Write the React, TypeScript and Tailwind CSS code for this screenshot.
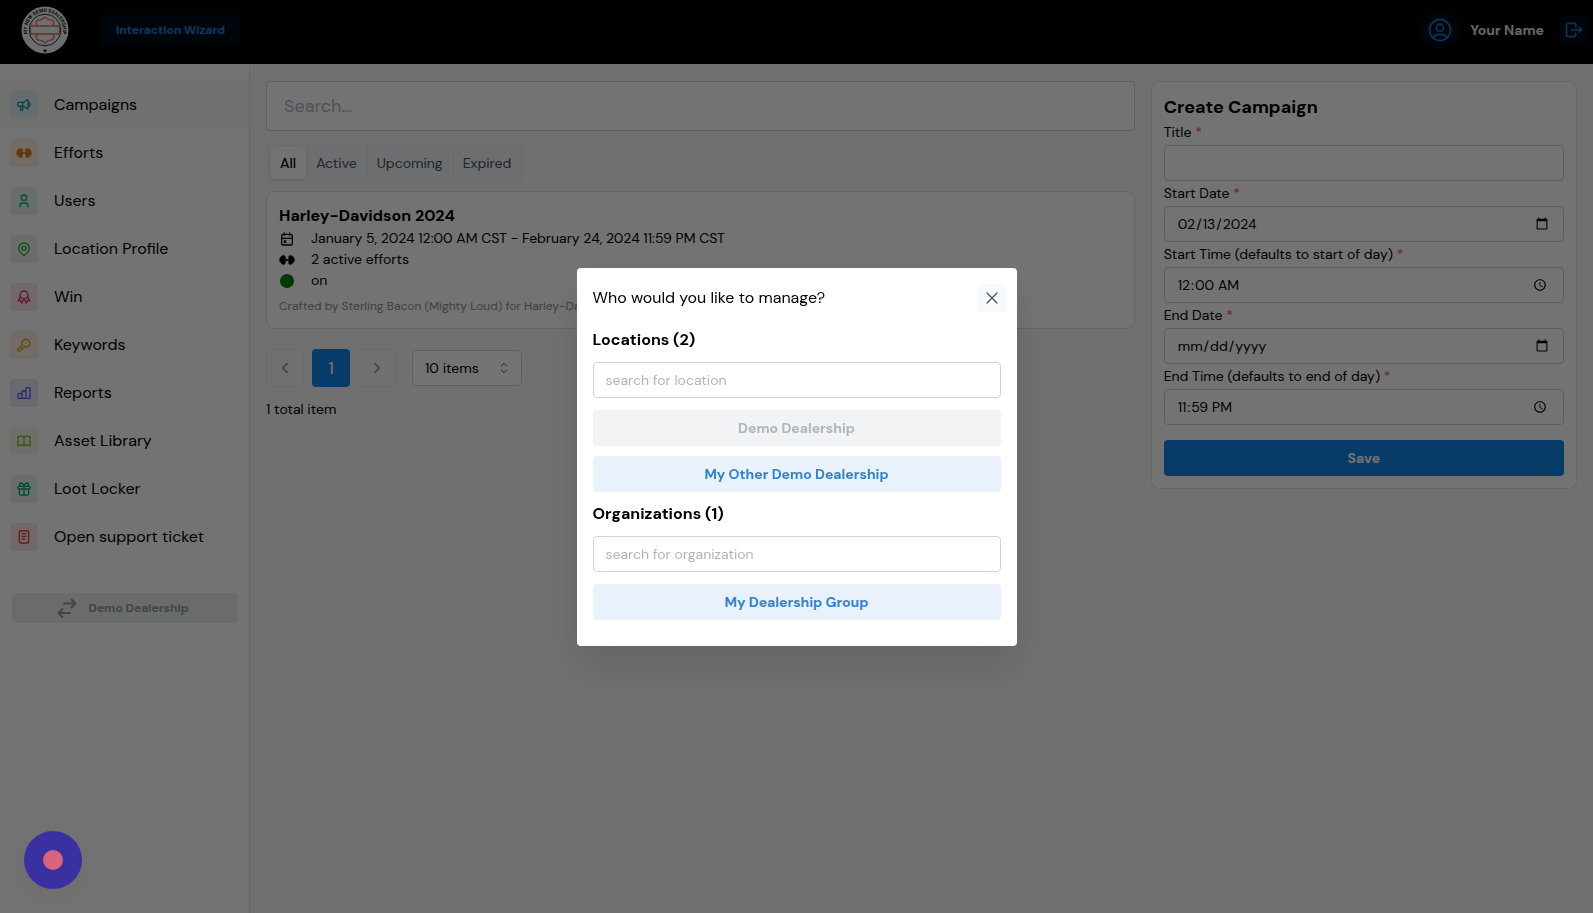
import type { ReactNode } from "react";
import {
  TbAward,
  TbBook,
  TbCalendarEvent,
  TbChevronLeft,
  TbChevronRight,
  TbGift,
  TbKey,
  TbLogout,
  TbMapPin,
  TbNotes,
  TbSelector,
  TbSpeakerphone,
  TbUser,
  TbUserCircle,
  TbX,
} from "react-icons/tb";

// Two fists meeting, used for efforts
function EffortsIcon({ size = 16 }: { size?: number }) {
  return (
    <svg width={size} height={size} viewBox="0 0 16 16" fill="currentColor" stroke="currentColor" strokeWidth="0.800" strokeLinejoin="round">
      <path d="M.8 7 2 4.700 3.800 3.700 5.500 3.700 6.200 5v2.400h3.600V5l.7-1.300 1.700 0 1.800 1L15.200 7v2.300l-1.500 1.500-1 1.300-2.200.2L9.800 11V8.600H6.200V11l-.7 1.300-2.200-.2-1-1.300L.8 9.300Z" />
    </svg>
  );
}

function BarsIcon() {
  return (
    <svg width="16" height="16" viewBox="0 0 24 24" fill="none" stroke="currentColor" strokeWidth="2" strokeLinejoin="round" strokeLinecap="round">
      <path d="M9 20V10a1 1 0 0 1 1-1h5v11M4 20h16a1 1 0 0 0 1-1V5a1 1 0 0 0-1-1h-4a1 1 0 0 0-1 1v4M9 13H4a1 1 0 0 0-1 1v5a1 1 0 0 0 1 1" />
    </svg>
  );
}

function SwapIcon() {
  return (
    <svg width="22" height="22" viewBox="0 0 22 22" fill="none" stroke="currentColor" strokeWidth="2" strokeLinecap="round" strokeLinejoin="round">
      <path d="M8 6.500h11.500M15.500 2.500l4 4-4 4M14 16H2.500M6.500 12l-4 4 4 4" />
    </svg>
  );
}

function Logo() {
  return (
    <svg width="48" height="48" viewBox="0 0 48 48" role="img" aria-label="My New Demo Dealership">
      <circle cx="24" cy="24" r="23.500" fill="#f1f3f5" />
      <circle cx="24" cy="24" r="15.800" fill="none" stroke="#1c3248" strokeWidth="1" />
      <path id="logo-arc" d="M6.600 28.700A18 18 0 1 1 41.400 28.700" fill="none" />
      <text className="font-['Roboto'] font-bold" fontSize="4.900" fill="#111">
        <textPath href="#logo-arc" startOffset="50%" textAnchor="middle">
          MY NEW DEMO DEALERSHIP
        </textPath>
      </text>
      <g fill="none" stroke="#e8703a" strokeWidth="1.300" strokeLinejoin="round">
        <path d="M15.500 20c.5-1.200.3-2.200-.5-3.200l1.500-2.800c2.500.5 5-.5 7.500-3 2.500 2.500 5 3.500 7.500 3l1.500 2.800c-.8 1-1 2-.5 3.200" />
        <path d="M15.500 28c.5 1.200.3 2.200-.5 3.200l1.500 2.800c2.500-.5 5 .5 7.500 3 2.500-2.500 5-3.500 7.500-3l1.500-2.800c-.8-1-1-2-.5-3.200" />
        <path d="M9.500 20h29v8h-29z" />
      </g>
      <path d="m24 42.500.6 1.500 1.600.1-1.200 1 .4 1.500-1.400-.8-1.400.8.4-1.500-1.200-1 1.600-.1z" fill="#111" />
    </svg>
  );
}

interface NavItem {
  label: string;
  icon: ReactNode;
  tint: string;
}

const NAV_ITEMS: NavItem[] = [
  { label: "Campaigns", icon: <TbSpeakerphone size={16} />, tint: "bg-[#e3f1f3] text-[#1098ad]" },
  { label: "Efforts", icon: <EffortsIcon />, tint: "bg-[#fdeee2] text-[#e07818]" },
  { label: "Users", icon: <TbUser size={16} />, tint: "bg-[#e6f3ef] text-[#12a67c]" },
  { label: "Location Profile", icon: <TbMapPin size={16} />, tint: "bg-[#e8f4ea] text-[#37a84c]" },
  { label: "Win", icon: <TbAward size={16} />, tint: "bg-[#f8e6ee] text-[#d6336c]" },
  { label: "Keywords", icon: <TbKey size={16} />, tint: "bg-[#faf2e2] text-[#eaa030]" },
  { label: "Reports", icon: <BarsIcon />, tint: "bg-[#e8ebf8] text-[#5064d8]" },
  { label: "Asset Library", icon: <TbBook size={16} />, tint: "bg-[#f1f6e6] text-[#82b82e]" },
  { label: "Loot Locker", icon: <TbGift size={16} />, tint: "bg-[#e6f3ef] text-[#12a67c]" },
  { label: "Open support ticket", icon: <TbNotes size={16} />, tint: "bg-[#fae8e8] text-[#e03e3e]" },
];

const TABS = ["All", "Active", "Upcoming", "Expired"];

const FIELDS = [
  { id: "title", label: "Title", type: "text", value: "" },
  { id: "start-date", label: "Start Date", type: "date", value: "2024-02-13" },
  { id: "start-time", label: "Start Time (defaults to start of day)", type: "time", value: "00:00" },
  { id: "end-date", label: "End Date", type: "date", value: "" },
  { id: "end-time", label: "End Time (defaults to end of day)", type: "time", value: "23:59" },
];

function Header() {
  return (
    <header className="flex h-16 items-center bg-[#040404] pr-[5px] pb-1 pl-[21px]">
      <Logo />
      <button className="ml-8 h-[30px] rounded bg-[#020c1a] px-[15px] text-xs font-bold text-[#1c7ed6]">
        Interaction Wizard
      </button>
      <div className="ml-auto flex items-center">
        <button aria-label="Profile" className="flex size-[38px] items-center justify-center rounded-full bg-[#020c1a] text-[#1971c2]">
          <TbUserCircle size={28} strokeWidth={1.500} />
        </button>
        <span className="ml-[11px] text-sm font-bold text-[#e0e2e5]">Your Name</span>
        <button aria-label="Log out" className="ml-4 flex size-7 items-center justify-center rounded bg-[#020c1a] text-[#1971c2]">
          <TbLogout size={20} />
        </button>
      </div>
    </header>
  );
}

function Sidebar() {
  return (
    <aside className="w-[250px] shrink-0 border-r border-[#dee2e6] bg-white pt-4">
      <nav>
        {NAV_ITEMS.map((item, i) => (
          <a
            key={item.label}
            href="#"
            className={`flex h-12 items-center gap-4 px-2.5 text-base ${i === 0 ? "bg-[#f8f9f4]" : ""}`}
          >
            <span className={`flex size-7 items-center justify-center rounded ${item.tint}`}>{item.icon}</span>
            {item.label}
          </a>
        ))}
      </nav>
      <div className="px-3 pt-8">
        <button className="flex h-[30px] w-full items-center justify-center gap-2.5 rounded bg-[#ebf0f0] pr-1 text-xs font-bold text-[#9097a3]">
          <SwapIcon />
          Demo Dealership
        </button>
      </div>
    </aside>
  );
}

function CampaignCard() {
  return (
    <article className="mt-2 rounded-lg border border-[#dee2e6] bg-white p-3">
      <h2 className="text-base leading-6 font-bold">Harley-Davidson 2024</h2>
      <ul className="text-sm leading-[21px]">
        <li className="flex items-center gap-4">
          <TbCalendarEvent size={16} />
          January 5, 2024 12:00 AM CST - February 24, 2024 11:59 PM CST
        </li>
        <li className="flex items-center gap-4">
          <EffortsIcon />
          2 active efforts
        </li>
        <li className="flex items-center gap-4">
          <span className="mx-px size-3.5 rounded-full bg-[#008000]" />
          on
        </li>
      </ul>
      <p className="mt-1.5 text-xs leading-[19px] text-[#868e96]">
        Crafted by Sterling Bacon (Mighty Loud) for Harley-Davidson
      </p>
    </article>
  );
}

function Pager() {
  const arrow =
    "flex size-[38px] items-center justify-center rounded border border-[#e9ecef] text-[#868e96]";
  return (
    <div className="mt-5 flex items-center gap-2">
      <button aria-label="Previous page" className={arrow}>
        <TbChevronLeft size={18} />
      </button>
      <button className="size-[38px] rounded bg-[#1186e8] text-lg text-white">1</button>
      <button aria-label="Next page" className={arrow}>
        <TbChevronRight size={18} />
      </button>
      <div className="relative ml-2">
        <select
          aria-label="Items per page"
          className="h-9 w-[110px] appearance-none rounded border border-[#ced4da] bg-white px-3 text-sm"
        >
          <option>10 items</option>
        </select>
        <TbSelector size={16} strokeWidth={1.500} className="pointer-events-none absolute top-2.5 right-2.5 text-[#495057]" />
      </div>
    </div>
  );
}

function CampaignForm() {
  return (
    <form className="rounded-lg border border-[#dee2e6] bg-white p-3">
      <h2 className="text-lg leading-[26px] font-bold">Create Campaign</h2>
      {FIELDS.map((f) => (
        <div key={f.id}>
          <label htmlFor={f.id} className="block text-sm leading-[25px]">
            {f.label} <span className="text-[#fa5252]">*</span>
          </label>
          <input
            id={f.id}
            type={f.type}
            defaultValue={f.value}
            className="block h-9 w-full rounded border border-[#ced4da] bg-white px-3 text-sm"
          />
        </div>
      ))}
      <button type="button" className="mt-[15px] h-9 w-full rounded bg-[#1186e8] text-sm font-bold text-white">
        Save
      </button>
    </form>
  );
}

function ManageSection({ title, placeholder, children }: { title: string; placeholder: string; children: ReactNode }) {
  return (
    <section className="flex flex-col gap-2.5">
      <h3 className="text-base leading-[25px] font-bold">{title}</h3>
      <input
        type="text"
        aria-label={placeholder}
        placeholder={placeholder}
        className="mb-0.5 h-9 w-full rounded border border-[#ced4da] px-3 text-sm placeholder:text-[#adb5bd]"
      />
      {children}
    </section>
  );
}

function ManageModal() {
  const choice = "h-9 rounded bg-[#e9f2fc] text-sm font-bold text-[#3182ce]";
  return (
    <div className="fixed inset-0 z-10 flex items-center justify-center bg-black/55">
      <div role="dialog" aria-modal="true" aria-labelledby="manage-title" className="w-[440px] rounded bg-white px-4 pt-4 pb-[26px] shadow-[0_20px_40px_rgba(0,0,0,0.12)]">
        <div className="-mr-[5px] mb-[15px] flex items-center justify-between">
          <h2 id="manage-title" className="text-base">Who would you like to manage?</h2>
          <button aria-label="Close" className="flex size-7 items-center justify-center rounded bg-[#f8f9fa] text-[#495057]">
            <TbX size={20} strokeWidth={1.500} />
          </button>
        </div>
        <div className="flex flex-col gap-[9px]">
          <ManageSection title="Locations (2)" placeholder="search for location">
            <button disabled className="h-9 rounded bg-[#f1f3f5] text-sm font-bold text-[#adb5bd]">
              Demo Dealership
            </button>
            <button className={choice}>My Other Demo Dealership</button>
          </ManageSection>
          <ManageSection title="Organizations (1)" placeholder="search for organization">
            <button className={choice}>My Dealership Group</button>
          </ManageSection>
        </div>
      </div>
    </div>
  );
}

export default function App() {
  return (
    <div className="flex min-h-screen flex-col bg-[#f8f9fa] font-['DM_Sans','Inter',sans-serif] text-black">
      <Header />
      <div className="flex grow pt-px">
        <Sidebar />
        <main className="grid grow grid-cols-3 items-start gap-4 p-4">
          <div className="col-span-2">
            <input
              type="search"
              aria-label="Search"
              placeholder="Search..."
              className="block h-[50px] w-full rounded border border-[#ced4da] bg-white px-[17px] text-lg placeholder:text-[#adb5bd]"
            />
            <div className="mt-3 flex w-fit rounded bg-[#f1f3f5] p-1 text-sm">
              {TABS.map((tab, i) => (
                <button
                  key={tab}
                  className={`h-8 ${
                    i === 0
                      ? "rounded bg-white px-2.5 font-medium shadow-sm"
                      : i === 1
                        ? "px-2.5 text-[#495057]"
                        : "border-l border-[#e3e6e9] pr-2.5 pl-[9px] text-[#495057]"
                  }`}
                >
                  {tab}
                </button>
              ))}
            </div>
            <CampaignCard />
            <Pager />
            <p className="mt-3 text-sm leading-5">1 total item</p>
          </div>
          <CampaignForm />
        </main>
      </div>
      <ManageModal />
      {/* Recorder bubble stays above the overlay */}
      <button
        aria-label="Record"
        className="fixed bottom-6 left-6 z-20 flex size-[58px] items-center justify-center rounded-full bg-[#3a30a0] shadow-[0_8px_32px_rgba(0,0,0,0.06)]"
      >
        <span className="size-5 rounded-full bg-[#d9657c]" />
      </button>
    </div>
  );
}
